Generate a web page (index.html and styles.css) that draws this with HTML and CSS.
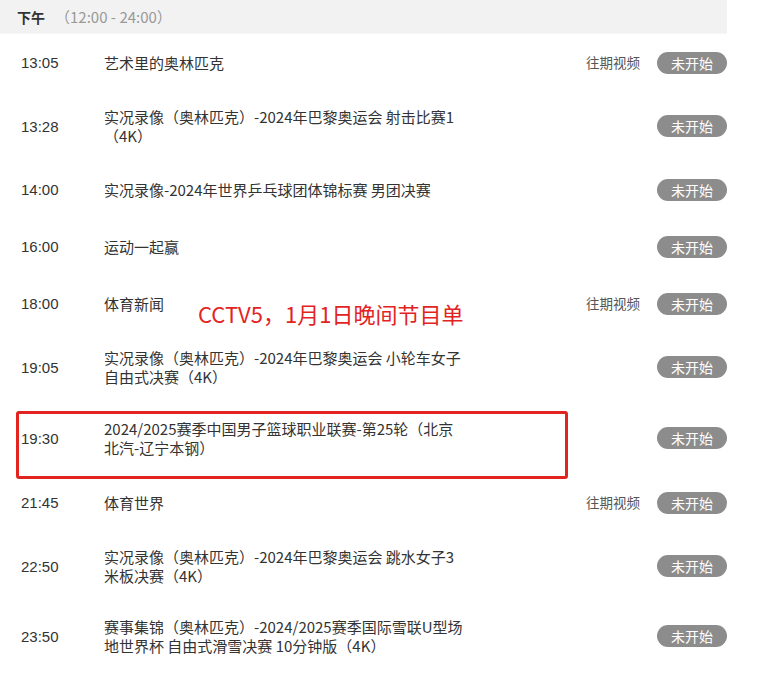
FILE: index.html
```html
<!DOCTYPE html>
<html lang="zh-CN">
<head>
    <meta charset="UTF-8">
    <title>CCTV5 节目单</title>
    <link rel="stylesheet" href="styles.css">
</head>
<body>
    <div class="schedule">
        <div class="period">
            <span class="period-name">下午</span>
            <span class="period-range">（12:00 - 24:00）</span>
        </div>

        <ul class="programs">
            <li class="program">
                <span class="time">13:05</span>
                <span class="title">艺术里的奥林匹克</span>
                <span class="replay">往期视频</span>
                <span class="status">未开始</span>
            </li>
            <li class="program">
                <span class="time">13:28</span>
                <span class="title">实况录像（奥林匹克）-2024年巴黎奥运会 射击比赛1<br>（4K）</span>
                <span class="status">未开始</span>
            </li>
            <li class="program">
                <span class="time">14:00</span>
                <span class="title">实况录像-2024年世界乒乓球团体锦标赛 男团决赛</span>
                <span class="status">未开始</span>
            </li>
            <li class="program">
                <span class="time">16:00</span>
                <span class="title">运动一起赢</span>
                <span class="status">未开始</span>
            </li>
            <li class="program">
                <span class="time">18:00</span>
                <span class="title">体育新闻</span>
                <span class="replay">往期视频</span>
                <span class="status">未开始</span>
            </li>
            <li class="program">
                <span class="time">19:05</span>
                <span class="title">实况录像（奥林匹克）-2024年巴黎奥运会 小轮车女子<br>自由式决赛（4K）</span>
                <span class="status">未开始</span>
            </li>
            <li class="program marked">
                <span class="time">19:30</span>
                <span class="title">2024/2025赛季中国男子篮球职业联赛-第25轮（北京<br>北汽-辽宁本钢）</span>
                <span class="status">未开始</span>
            </li>
            <li class="program">
                <span class="time">21:45</span>
                <span class="title">体育世界</span>
                <span class="replay">往期视频</span>
                <span class="status">未开始</span>
            </li>
            <li class="program">
                <span class="time">22:50</span>
                <span class="title">实况录像（奥林匹克）-2024年巴黎奥运会 跳水女子3<br>米板决赛（4K）</span>
                <span class="status">未开始</span>
            </li>
            <li class="program">
                <span class="time">23:50</span>
                <span class="title">赛事集锦（奥林匹克）-2024/2025赛季国际雪联U型场<br>地世界杯 自由式滑雪决赛 10分钟版（4K）</span>
                <span class="status">未开始</span>
            </li>
        </ul>

        <!-- annotation added on top of the screenshot -->
        <div class="note">CCTV5，1月1日晚间节目单</div>
    </div>
</body>
</html>
```

FILE: styles.css
```css
body {
    margin: 0;
    background-color: #fff;
    font-family: "Noto Sans CJK SC", "Noto Sans", sans-serif;
    color: #333;
}
.schedule {
    position: relative;
    width: 727px;
}
.period {
    height: 33px;
    display: flex;
    align-items: center;
    padding-left: 17px;
    background-color: #f2f2f2;
    border-bottom: 1px solid #f7f7f7;
    font-size: 14px;
}
.period-name {
    font-weight: bold;
    color: #333;
}
.period-range {
    margin-left: 10px;
    font-size: 15px;
    color: #999;
}
.programs {
    list-style: none;
    margin: 0;
    padding: 0;
}
.program {
    display: flex;
    align-items: center;
    min-height: 57px;
    padding: 16px 0;
    box-sizing: border-box;
    font-size: 15px;
    line-height: 19px;
}
.time {
    width: 83px;
    padding-left: 21px;
    flex-shrink: 0;
    font-family: "Liberation Sans", Arial, sans-serif;
    color: #333;
}
.title {
    width: 420px;
    flex-shrink: 0;
}
.replay {
    margin-left: auto;
    margin-right: 17px;
    font-size: 13.5px;
    color: #555;
}
.status {
    margin-left: auto;
    width: 70px;
    height: 22px;
    line-height: 22px;
    border-radius: 11px;
    background-color: #8c8c8c;
    color: #fff;
    font-size: 14px;
    text-align: center;
}
.replay + .status {
    margin-left: 0;
}
.program.marked {
    position: relative;
    padding: 17px 0;
}
.program.marked::after {
    content: "";
    position: absolute;
    left: 16px;
    top: 9px;
    width: 552px;
    height: 68px;
    box-sizing: border-box;
    border: 3px solid #e3231f;
    border-radius: 3px;
}
.note {
    position: absolute;
    left: 198px;
    top: 298px;
    font-size: 22px;
    line-height: 30px;
    color: #e3231f;
}
```
